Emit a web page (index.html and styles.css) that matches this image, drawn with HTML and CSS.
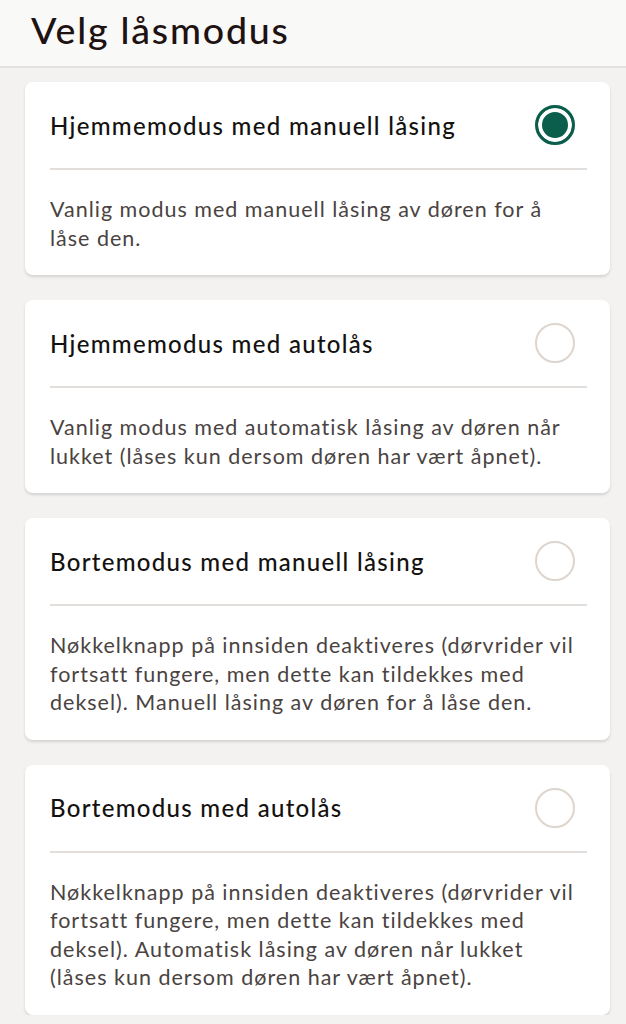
FILE: index.html
```html
<!DOCTYPE html>
<html>
<head>
    <link rel="stylesheet" href="styles.css">
</head>
<body>
    <header class="topbar">
        <h1 class="page-title">Velg låsmodus</h1>
    </header>

    <main class="mode-list">
        <div class="mode-card">
            <div class="mode-head">
                <span class="mode-name">Hjemmemodus med manuell låsing</span>
                <span class="radio selected"></span>
            </div>
            <div class="mode-divider"></div>
            <p class="mode-desc">Vanlig modus med manuell låsing av døren for å låse den.</p>
        </div>

        <div class="mode-card">
            <div class="mode-head">
                <span class="mode-name">Hjemmemodus med autolås</span>
                <span class="radio"></span>
            </div>
            <div class="mode-divider"></div>
            <p class="mode-desc">Vanlig modus med automatisk låsing av døren når lukket (låses kun dersom døren har vært åpnet).</p>
        </div>

        <div class="mode-card">
            <div class="mode-head">
                <span class="mode-name">Bortemodus med manuell låsing</span>
                <span class="radio"></span>
            </div>
            <div class="mode-divider"></div>
            <p class="mode-desc">Nøkkelknapp på innsiden deaktiveres (dørvrider vil fortsatt fungere, men dette kan tildekkes med deksel). Manuell låsing av døren for å låse den.</p>
        </div>

        <div class="mode-card">
            <div class="mode-head">
                <span class="mode-name">Bortemodus med autolås</span>
                <span class="radio"></span>
            </div>
            <div class="mode-divider"></div>
            <p class="mode-desc">Nøkkelknapp på innsiden deaktiveres (dørvrider vil fortsatt fungere, men dette kan tildekkes med deksel). Automatisk låsing av døren når lukket (låses kun dersom døren har vært åpnet).</p>
        </div>
    </main>
</body>
</html>
```

FILE: styles.css
```css
body {
    margin: 0;
    background-color: #f3f2f0;
    font-family: Lato, "Noto Sans", sans-serif;
    overflow: hidden;
}
.topbar {
    height: 68px;
    box-sizing: border-box;
    display: flex;
    align-items: center;
    padding: 0 0 8px 31px;
    background-color: #f9f9f8;
    border-bottom: 2px solid #e3e2e0;
}
.page-title {
    margin: 0;
    font-size: 37.5px;
    font-weight: 500;
    letter-spacing: 1.8px;
    color: #1f1212;
}
.mode-list {
    display: flex;
    flex-direction: column;
    gap: 25px;
    padding: 14px 16px 0 25px;
}
.mode-card {
    background-color: #fff;
    border-radius: 8px;
    box-shadow: 0 2px 3px rgba(0, 0, 0, 0.13);
}
.mode-head {
    height: 86px;
    display: flex;
    align-items: center;
    justify-content: space-between;
    padding: 0 35px 0 25px;
}
.mode-name {
    font-size: 24px;
    font-weight: 500;
    letter-spacing: 1.3px;
    color: #141210;
}
.radio {
    width: 36px;
    height: 36px;
    border: 2px solid #ddd5ce;
    border-radius: 50%;
    box-sizing: content-box;
}
.radio.selected {
    width: 34px;
    height: 34px;
    border: 3px solid #0b5e4b;
    background-color: #0b5e4b;
    box-shadow: inset 0 0 0 4px #fff;
}
.mode-divider {
    margin: 0 23px 0 25px;
    border-top: 2px solid #e2dedb;
}
.mode-desc {
    margin: 0;
    padding: 25px 25px 23px;
    font-size: 21.5px;
    line-height: 28.5px;
    letter-spacing: 1px;
    color: #4a4341;
}
```
